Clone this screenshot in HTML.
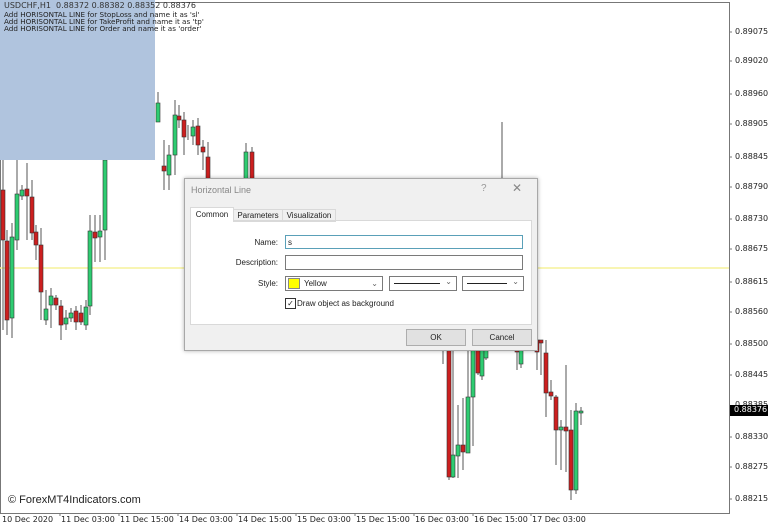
<!DOCTYPE html>
<html><head><meta charset="utf-8"><style>
body{margin:0;width:768px;height:528px;background:#fff;position:relative;overflow:hidden;font-family:"Liberation Sans",sans-serif}
.ax{position:absolute;left:735px;font-size:8px;color:#222;font-family:"DejaVu Sans",sans-serif}
.bx{position:absolute;top:515px;font-size:8px;color:#222;font-family:"DejaVu Sans",sans-serif}
.dlg{position:absolute;left:184px;top:178px;width:352px;height:171px;background:#f0f0f0;border:1px solid #a8a8a8;box-shadow:0 0 4px rgba(0,0,0,.3);font-size:8px;color:#222}
.in{position:absolute;background:#fff;border:1px solid #7a7a7a;height:13px}
.lbl{position:absolute;text-align:right;width:60px}
.btn{position:absolute;top:150px;width:58px;height:15px;background:#e1e1e1;border:1px solid #adadad;text-align:center;line-height:15px;font-size:8px}
</style></head><body>
<svg width="768" height="528" style="position:absolute;left:0;top:0">
<rect x="0.5" y="2.5" width="729" height="511" fill="none" stroke="#777"/>
<line x1="0" y1="268" x2="729" y2="268" stroke="#f6f29a" stroke-width="1.5"/>
<g stroke="#555" stroke-width="1">
<path d="M3 160V330M7 230V335M12 223V338M17 160V250M22 185V200M27 163V240M32 180V240M36 225V260M41 228V320M46 290V325M51 288V328M56 295V310M61 300V340M66 310V330M71 308V322M76 306V330M81 305V325M86 300V330M90 215V315M95 215V262M100 215V262M105 100V260M158 92V122M164 140V190M169 145V190M175 100V175M179 105V128M184 112V155M188 125V140M193 120V145M198 118V155M203 140V170M208 142V190M246 143V190M252 147V190M502 122V180M443 340V364M449 340V480M453 340V478M458 405V478M463 398V470M468 340V453M473 340V446M478 340V375M482 340V380M486 340V360M517 340V370M521 340V368M537 340V370M541 340V375M546 340V417M551 380V400M556 395V465M561 420V470M566 365V472M571 410V500M576 403V494M581 407V425"/>
</g>
<g stroke="#333" stroke-width=".6">
<g fill="#cc1f1f">
<rect x="1" y="190" width="4" height="50"/><rect x="5" y="241" width="4" height="79"/><rect x="25" y="189" width="4" height="7"/><rect x="30" y="197" width="4" height="36"/><rect x="34" y="232" width="4" height="13"/><rect x="39" y="245" width="4" height="47"/><rect x="54" y="298" width="4" height="7"/><rect x="59" y="306" width="4" height="19"/><rect x="74" y="311" width="4" height="11"/><rect x="79" y="313" width="4" height="9"/><rect x="93" y="232" width="4" height="6"/>
<rect x="162" y="166" width="4" height="5"/><rect x="177" y="116" width="4" height="4"/><rect x="182" y="120" width="4" height="17"/><rect x="196" y="126" width="4" height="19"/><rect x="201" y="147" width="4" height="5"/><rect x="206" y="157" width="4" height="26"/><rect x="250" y="152" width="4" height="30"/>
<rect x="447" y="340" width="4" height="137"/><rect x="461" y="445" width="4" height="7"/><rect x="476" y="340" width="4" height="33"/><rect x="515" y="340" width="4" height="12"/><rect x="535" y="340" width="4" height="12"/><rect x="539" y="340" width="4" height="3"/><rect x="544" y="353" width="4" height="40"/><rect x="549" y="392" width="4" height="4"/><rect x="554" y="397" width="4" height="33"/><rect x="564" y="427" width="4" height="4"/><rect x="569" y="430" width="4" height="60"/>
</g>
<g fill="#2ecc71">
<rect x="10" y="237" width="4" height="81"/><rect x="15" y="194" width="4" height="46"/><rect x="20" y="190" width="4" height="6"/><rect x="44" y="309" width="4" height="11"/><rect x="49" y="296" width="4" height="9"/><rect x="64" y="318" width="4" height="6"/><rect x="69" y="313" width="4" height="5"/><rect x="84" y="307" width="4" height="18"/><rect x="88" y="231" width="4" height="75"/><rect x="98" y="231" width="4" height="6"/><rect x="103" y="160" width="4" height="70"/>
<rect x="156" y="103" width="4" height="19"/><rect x="167" y="155" width="4" height="20"/><rect x="173" y="115" width="4" height="40"/><rect x="191" y="127" width="4" height="9"/><rect x="244" y="152" width="4" height="30"/>
<rect x="451" y="455" width="4" height="22"/><rect x="456" y="445" width="4" height="11"/><rect x="466" y="397" width="4" height="56"/><rect x="471" y="340" width="4" height="57"/><rect x="480" y="340" width="4" height="36"/><rect x="484" y="340" width="4" height="18"/><rect x="519" y="340" width="4" height="24"/><rect x="559" y="427" width="4" height="3"/><rect x="574" y="411" width="4" height="79"/><rect x="579" y="411" width="4" height="2"/>
</g></g>
<rect x="0" y="0" width="155" height="160" fill="#b0c4de"/>
<rect x="730" y="405" width="38" height="11" fill="#000"/>
<g stroke="#777"><path d="M729 32h3M729 61h3M729 94h3M729 124h3M729 157h3M729 187h3M729 219h3M729 249h3M729 282h3M729 312h3M729 344h3M729 375h3M729 437h3M729 467h3M729 499h3M60 513v3M119 513v3M178 513v3M237 513v3M296 513v3M355 513v3M414 513v3M473 513v3M531 513v3"/></g>
</svg>
<div style="position:absolute;left:4px;top:1px;font-size:8px;color:#333;font-family:'DejaVu Sans',sans-serif">USDCHF,H1 &nbsp;0.88372 0.88382 0.88352 0.88376</div>
<div style="position:absolute;left:4px;top:11px;font-size:7.2px;line-height:7px;color:#222;font-family:'DejaVu Sans',sans-serif">Add HORISONTAL LINE for StopLoss and name it as 'sl'<br>Add HORISONTAL LINE for TakeProfit and name it as 'tp'<br>Add HORISONTAL LINE for Order and name it as 'order'</div>
<div class="ax" style="top:27px">0.89075</div><div class="ax" style="top:56px">0.89020</div><div class="ax" style="top:89px">0.88960</div><div class="ax" style="top:119px">0.88905</div><div class="ax" style="top:152px">0.88845</div><div class="ax" style="top:182px">0.88790</div><div class="ax" style="top:214px">0.88730</div><div class="ax" style="top:244px">0.88675</div><div class="ax" style="top:277px">0.88615</div><div class="ax" style="top:307px">0.88560</div><div class="ax" style="top:339px">0.88500</div><div class="ax" style="top:370px">0.88445</div><div class="ax" style="top:400px">0.88385</div><div class="ax" style="top:405px;color:#fff;background:#000;left:731px;padding:0 3px">0.88376</div><div class="ax" style="top:432px">0.88330</div><div class="ax" style="top:462px">0.88275</div><div class="ax" style="top:494px">0.88215</div>
<div class="bx" style="left:2px">10 Dec 2020</div><div class="bx" style="left:61px">11 Dec 03:00</div><div class="bx" style="left:120px">11 Dec 15:00</div><div class="bx" style="left:179px">14 Dec 03:00</div><div class="bx" style="left:238px">14 Dec 15:00</div><div class="bx" style="left:297px">15 Dec 03:00</div><div class="bx" style="left:356px">15 Dec 15:00</div><div class="bx" style="left:415px">16 Dec 03:00</div><div class="bx" style="left:474px">16 Dec 15:00</div><div class="bx" style="left:532px">17 Dec 03:00</div>
<div style="position:absolute;left:8px;top:494px;font-size:11px;color:#222">© ForexMT4Indicators.com</div>
<div class="dlg">
<div style="position:absolute;left:6px;top:6px;font-size:9px;color:#888">Horizontal Line</div>
<div style="position:absolute;left:296px;top:4px;font-size:10px;color:#999">?</div>
<div style="position:absolute;left:327px;top:2px;font-size:12px;color:#888">✕</div>
<div style="position:absolute;left:5px;top:41px;width:340px;height:103px;background:#fff;border:1px solid #d9d9d9"></div>
<div style="position:absolute;left:5px;top:28px;width:42px;height:14px;background:#fff;border:1px solid #d9d9d9;border-bottom:none;line-height:13px;text-align:center">Common</div>
<div style="position:absolute;left:48px;top:30px;width:48px;height:11px;border:1px solid #d9d9d9;line-height:11px;text-align:center">Parameters</div>
<div style="position:absolute;left:97px;top:30px;width:52px;height:11px;border:1px solid #d9d9d9;line-height:11px;text-align:center">Visualization</div>
<div class="lbl" style="left:33px;top:59px">Name:</div>
<div class="in" style="left:100px;top:56px;border-color:#5aa0b8;line-height:13px;padding-left:2px;box-sizing:border-box;width:238px;height:14px">s</div>
<div class="lbl" style="left:33px;top:79px">Description:</div>
<div class="in" style="left:100px;top:76px;width:236px"></div>
<div class="lbl" style="left:33px;top:100px">Style:</div>
<div class="in" style="left:100px;top:97px;width:96px;line-height:13px"><span style="display:inline-block;width:10px;height:9px;background:#ff0;border:1px solid #888;margin:1px 4px 0 2px;vertical-align:top"></span>Yellow<span style="position:absolute;right:4px;color:#666">⌄</span></div>
<div class="in" style="left:204px;top:97px;width:66px"><div style="position:absolute;left:4px;top:6px;width:46px;border-top:1px solid #222"></div><span style="position:absolute;right:4px;color:#666">⌄</span></div>
<div class="in" style="left:277px;top:97px;width:60px"><div style="position:absolute;left:4px;top:6px;width:40px;border-top:1px solid #222"></div><span style="position:absolute;right:4px;color:#666">⌄</span></div>
<div style="position:absolute;left:100px;top:119px;width:9px;height:9px;border:1px solid #333;background:#fff;font-size:8px;line-height:9px;text-align:center">✓</div>
<div style="position:absolute;left:112px;top:120px">Draw object as background</div>
<div class="btn" style="left:221px">OK</div>
<div class="btn" style="left:287px">Cancel</div>
</div>
</body></html>
